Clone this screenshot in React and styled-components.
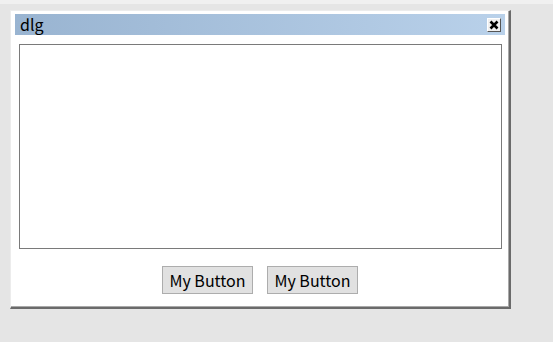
import React from 'react';
import styled, { createGlobalStyle } from 'styled-components';

const GlobalStyle = createGlobalStyle`
  html, body {
    margin: 0;
    padding: 0;
    background: #e5e5e5;
    font-family: "Noto Sans CJK SC", "Noto Sans", sans-serif;
  }
`;

const Page = styled.div`
  width: 553px;
  height: 342px;
  overflow: hidden;
  display: flex;
  flex-direction: column;
`;

const TopStrip = styled.div`
  height: 4px;
  background: #f0f0f0;
`;

const Dialog = styled.div`
  box-sizing: border-box;
  width: 501px;
  height: 299px;
  margin: 6px 0 0 10px;
  background: #fff;
  border-left: 1px solid #ececec;
  border-top: 1px solid #ececec;
  border-right: 2px solid #6a6a6a;
  border-bottom: 2px solid #6a6a6a;
  box-shadow: inset -1px -1px 0 #a9a9a9;
  padding: 3px 0 0 4px;
  display: flex;
  flex-direction: column;
`;

const TitleBar = styled.div`
  width: 490px;
  height: 21px;
  background: linear-gradient(to right, #99b4d1, #b9d1ea);
  display: flex;
  align-items: center;
  justify-content: space-between;
  padding: 0 4px 0 5px;
  box-sizing: border-box;
`;

const Title = styled.span`
  font-size: 16px;
  line-height: 21px;
  color: #000;
`;

const CloseBox = styled.div`
  width: 14px;
  height: 14px;
  box-sizing: border-box;
  background: #f0f0f0;
  border: 1px solid;
  border-color: #fff #555 #555 #fff;
  display: flex;
  align-items: center;
  justify-content: center;
`;

const TextBox = styled.div`
  box-sizing: border-box;
  width: 483px;
  height: 205px;
  margin: 9px 0 0 4px;
  border: 1px solid #7a7a7a;
  background: #fff;
`;

const ButtonRow = styled.div`
  display: flex;
  justify-content: center;
  gap: 14px;
  margin-top: 17px;
  padding-right: 4px;
`;

const Button = styled.button`
  box-sizing: border-box;
  width: 91px;
  height: 28px;
  padding: 0;
  background: #e1e1e1;
  border: 1px solid #adadad;
  font-family: "Noto Sans CJK SC", "Noto Sans", sans-serif;
  font-size: 16px;
  color: #000;
  line-height: 26px;
`;

export default function App() {
  return (
    <>
      <GlobalStyle />
      <Page>
        <TopStrip />
        <Dialog>
          <TitleBar>
            <Title>dlg</Title>
            <CloseBox>
              <svg width="10" height="10" viewBox="0 0 10 10">
                <path d="M1.5 1.5 L8.5 8.5 M8.5 1.5 L1.5 8.5" stroke="#000" strokeWidth="2.6" />
              </svg>
            </CloseBox>
          </TitleBar>
          <TextBox />
          <ButtonRow>
            <Button>My Button</Button>
            <Button>My Button</Button>
          </ButtonRow>
        </Dialog>
      </Page>
    </>
  );
}
